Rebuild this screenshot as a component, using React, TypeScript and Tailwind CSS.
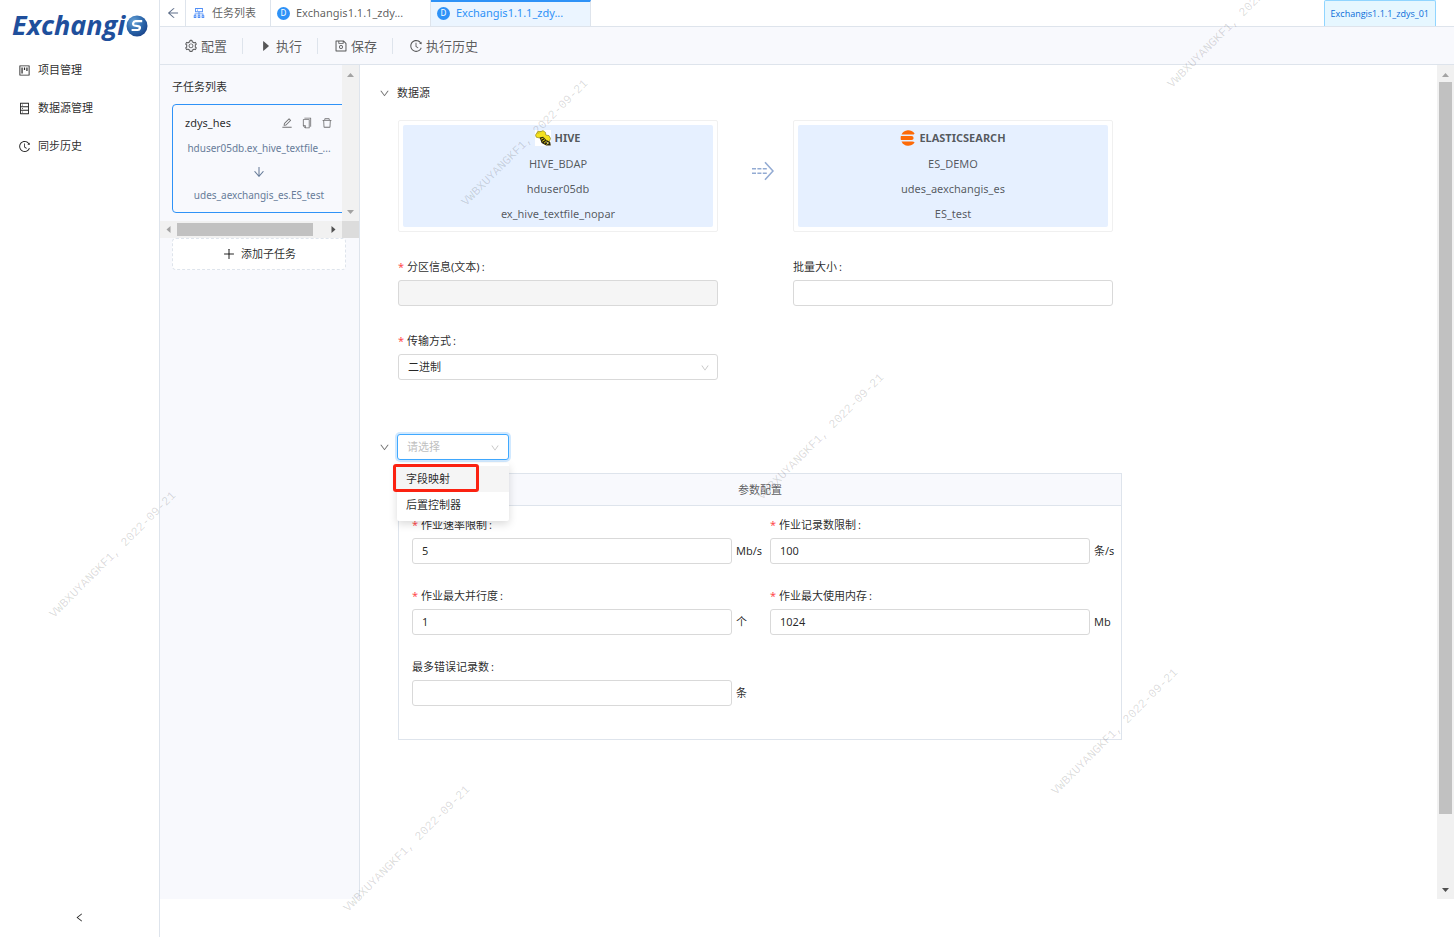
import React from "react";
import {
  AiOutlineArrowDown,
  AiOutlineArrowLeft,
  AiOutlineCluster,
  AiOutlineCopy,
  AiOutlineDatabase,
  AiOutlineDelete,
  AiOutlineDown,
  AiOutlineEdit,
  AiOutlineHistory,
  AiOutlineLeft,
  AiOutlinePlus,
  AiOutlineProject,
  AiOutlineSave,
  AiOutlineSetting,
  AiFillCaretRight,
} from "react-icons/ai";

const STAMP = "VWBXUYANGKF1, 2022-09-21";

const STRONG_STAMPS = [
  [113, 555],
  [407, 849],
  [525, 143],
  [821, 437],
  [1115, 732],
  [1231, 25],
];

function faintStamps() {
  const out: number[][] = [];
  for (let diff = -597; diff <= 1231; diff += 457) {
    for (let sum = 105; sum <= 2505; sum += 200) {
      const x = (sum + diff) / 2 - 90;
      const y = (sum - diff) / 2 + 90;
      if (x > -20 && x < 1470 && y > -20 && y < 950) out.push([x, y]);
    }
  }
  return out;
}

function Watermark() {
  return (
    <div aria-hidden="true" className="pointer-events-none absolute inset-0 z-50 overflow-hidden select-none">
      <svg className="h-full w-full font-['Liberation_Mono',monospace]">
        {faintStamps().map(([x, y]) => (
          <text key={`${x}:${y}`} transform={`translate(${x} ${y}) rotate(-45)`} textAnchor="middle" className="fill-black/[0.015] text-[18px]">
            {STAMP}
          </text>
        ))}
        {STRONG_STAMPS.map(([x, y]) => (
          <text key={`${x}:${y}`} transform={`translate(${x} ${y}) rotate(-45)`} textAnchor="middle" dominantBaseline="central" className="fill-black/15 text-[12px]">
            {STAMP}
          </text>
        ))}
      </svg>
    </div>
  );
}

function Logo() {
  return (
    <a href="#" aria-label="Exchangis" className="flex h-12 items-center gap-px pl-3 text-[#1f4f9c]">
      <span className="font-['Open_Sans',sans-serif] text-[27px] leading-none font-bold italic">Exchangi</span>
      <svg width="22" height="22" viewBox="0 0 22 22" className="mt-[3px] shrink-0">
        <defs>
          <radialGradient id="ball" cx="0.35" cy="0.3" r="0.8">
            <stop offset="0" stopColor="#6aa5d8" />
            <stop offset="0.55" stopColor="#2c67ab" />
            <stop offset="1" stopColor="#173f86" />
          </radialGradient>
        </defs>
        <circle cx="11" cy="11" r="10.5" fill="url(#ball)" />
        <path d="M16.2 6.2H9.6C7.2 6.2 6 9.9 8.4 10.5l4.4.9c1.9.5 1.2 3.6-1 3.6H5.6" fill="none" stroke="#fff" strokeWidth="2.2" />
      </svg>
    </a>
  );
}

const menu = [
  { label: "项目管理", Icon: AiOutlineProject },
  { label: "数据源管理", Icon: AiOutlineDatabase },
  { label: "同步历史", Icon: AiOutlineHistory },
];

function Sidebar() {
  return (
    <aside className="flex w-40 shrink-0 flex-col border-r border-[#dee4ec] bg-white">
      <Logo />
      <nav className="flex flex-1 flex-col pt-[3px] text-black/85">
        {menu.map(({ label, Icon }) => (
          <a key={label} href="#" className="flex h-[38px] items-center gap-[7px] pl-[18px]">
            <Icon size={13} />
            {label}
          </a>
        ))}
      </nav>
      <button type="button" aria-label="收起菜单" className="flex h-10 items-center justify-center text-black/85">
        <AiOutlineLeft size={11} />
      </button>
    </aside>
  );
}

function DocTab({ active }: { active?: boolean }) {
  return (
    <button
      type="button"
      className={
        active
          ? "flex w-40 items-center gap-[6px] border-t-2 border-r border-t-[#2e92f7] border-r-[#dee4ec] bg-[#ebf5ff] pb-[2px] pl-[6px] text-[#2e92f7]"
          : "flex w-40 items-center gap-[6px] border-r border-[#dee4ec] pl-[6px] text-black/65"
      }
    >
      <span className="flex size-[13px] items-center justify-center rounded-full bg-[#2e92f7] text-[8px] leading-none text-white">D</span>
      <span>Exchangis1.1.1_zdy...</span>
    </button>
  );
}

function TabBar() {
  return (
    <div className="flex h-[27px] border-b border-[#dee4ec] bg-white">
      <button type="button" aria-label="返回" className="flex w-[26px] items-center justify-center border-r border-[#dee4ec] text-[#5f6f8a]">
        <AiOutlineArrowLeft size={14} />
      </button>
      <button type="button" className="flex w-[85px] items-center gap-[6px] border-r border-[#dee4ec] pl-[6px] text-black/65">
        <AiOutlineCluster size={14} className="text-[#4f8ef7]" />
        任务列表
      </button>
      <DocTab />
      <DocTab active />
      <div className="mr-[18px] ml-auto flex items-center rounded-t-xs border border-b-0 border-[#91d5ff] bg-[#e6f7ff] px-[6px] pt-px font-['Open_Sans',sans-serif] text-[9px] text-[#096dd9]">
        Exchangis1.1.1_zdys_01
      </div>
    </div>
  );
}

const tools = [
  { label: "配置", Icon: AiOutlineSetting },
  { label: "执行", Icon: AiFillCaretRight },
  { label: "保存", Icon: AiOutlineSave },
  { label: "执行历史", Icon: AiOutlineHistory },
];

function Toolbar() {
  return (
    <div className="flex h-[38px] items-center border-b border-[#dee4ec] bg-[#f8f9fd] pl-2 text-[13px] text-black/65">
      {tools.map(({ label, Icon }, i) => (
        <React.Fragment key={label}>
          {i > 0 && <span className="h-4 w-px bg-[#dee4ec]" />}
          <button type="button" className="flex items-center gap-[3px] pr-[15px] pl-4">
            <Icon size={14} />
            {label}
          </button>
        </React.Fragment>
      ))}
    </div>
  );
}

function Tri({ dir, color }: { dir: "up" | "down" | "left" | "right"; color: string }) {
  const d = {
    up: "M0 6 L3.5 2 L7 6Z",
    down: "M0 2 L3.5 6 L7 2Z",
    left: "M5.5 0 L1.5 3.5 L5.5 7Z",
    right: "M1.5 0 L5.5 3.5 L1.5 7Z",
  }[dir];
  return (
    <svg width="7" height="7" viewBox="0 0 7 7" className="shrink-0">
      <path d={d} fill={color} />
    </svg>
  );
}

function TaskCard() {
  return (
    <div className="flex h-[109px] w-[174px] flex-col rounded border border-[#2e92f7] px-3 pt-[6px]">
      <div className="flex h-6 items-center text-black/85">
        <span className="flex-1">zdys_hes</span>
        <span className="flex gap-2 text-black/55">
          <button type="button" aria-label="编辑"><AiOutlineEdit size={12} /></button>
          <button type="button" aria-label="复制"><AiOutlineCopy size={12} /></button>
          <button type="button" aria-label="删除"><AiOutlineDelete size={12} /></button>
        </span>
      </div>
      <div className="flex flex-col items-center text-[10px] text-[#677c99]">
        <span className="h-[26px] leading-[26px] whitespace-nowrap">hduser05db.ex_hive_textfile_...</span>
        <span className="flex h-[22px] items-center"><AiOutlineArrowDown size={14} /></span>
        <span className="h-6 leading-6 whitespace-nowrap">udes_aexchangis_es.ES_test</span>
      </div>
    </div>
  );
}

function TaskPanel() {
  return (
    <section className="w-[200px] shrink-0 border-r border-[#dee4ec] bg-[#f8f9fd]">
      <div className="flex h-[156px]">
        <div className="min-w-0 flex-1 overflow-hidden pl-3">
          <h2 className="flex h-[39px] items-center pt-1 text-black/85">子任务列表</h2>
          <TaskCard />
        </div>
        <div className="flex w-[17px] flex-col items-center justify-between bg-[#f1f1f1] py-[6px]">
          <Tri dir="up" color="#a3a3a3" />
          <Tri dir="down" color="#a3a3a3" />
        </div>
      </div>
      <div className="flex h-[17px] bg-[#dcdcdc]">
        <div className="mr-[17px] flex flex-1 items-center bg-[#f1f1f1] px-[5px]">
          <Tri dir="left" color="#a3a3a3" />
          <span className="mr-[17px] ml-[5px] h-[13px] flex-1 bg-[#c1c1c1]" />
          <Tri dir="right" color="#505050" />
        </div>
      </div>
      <button type="button" className="ml-3 flex h-8 w-[174px] items-center justify-center gap-[5px] rounded border border-dashed border-[#dee4ec] bg-white text-black/85">
        <AiOutlinePlus size={14} />
        添加子任务
      </button>
    </section>
  );
}

function HiveIcon() {
  return (
    <svg width="16" height="16" viewBox="0 0 16 16">
      <rect width="16" height="16" fill="#fff" />
      <path d="M0.5 5 L3 1.2 L6 1.6 L8 0.6 L10.5 2.4 L10.8 5 L14 5.6 L15.6 8.6 L14 12 L9.5 10 L4.5 8 L1.2 7.2Z" fill="#f5e11d" stroke="#6b6206" strokeWidth="0.5" />
      <path d="M4.6 7.4 L8.2 6.8 L11 9.8 L15.2 12 L15.8 15.4 L11.2 15.6 L6.6 13Z" fill="#2b270d" />
      <path d="M6 9.2 L8.6 8 M7.2 11.4 L10 9.6 M9 13.2 L11.6 11 M11.6 14.8 L13.4 12.2" stroke="#f0d911" strokeWidth="0.9" />
      <path d="M11.5 12.2 L13.6 13.4" stroke="#fff" strokeWidth="0.8" />
    </svg>
  );
}

function ElasticIcon() {
  return (
    <svg width="16" height="16" viewBox="0 0 16 16" fill="#fd6a08">
      <path d="M1.5 4.6 A7.6 7.6 0 0 1 14.6 3.4 Q13.8 4.6 12.2 4.6Z" />
      <path d="M0.9 5.9 H11.5 A2.1 2.1 0 0 1 11.5 10.1 H0.9 A8 8 0 0 1 0.9 5.9Z" />
      <path d="M1.5 11.4 H12.2 Q13.8 11.4 14.6 12.6 A7.6 7.6 0 0 1 1.5 11.4Z" />
    </svg>
  );
}

function SourceCard({ icon, name, lines }: { icon: React.ReactNode; name: string; lines: string[] }) {
  return (
    <div className="rounded-xs border border-[#f0f0f0] bg-white p-1">
      <div className="flex flex-col items-center rounded-xs bg-[#e6f0ff] pb-px text-black/65">
        <div className="flex h-[26px] items-center gap-[3px] font-bold">
          {icon}
          {name}
        </div>
        {lines.map((line) => (
          <div key={line} className="h-[25px] leading-[25px]">{line}</div>
        ))}
      </div>
    </div>
  );
}

function FlowArrow() {
  return (
    <svg width="22" height="20" viewBox="0 0 22 20" fill="none" stroke="#93abd3" strokeWidth="1.4">
      <path d="M0 7.7H16M0 12.3H16" strokeDasharray="4 1.4" />
      <path d="M13 1.2L21 10L13 18.8" strokeWidth="1.6" />
    </svg>
  );
}

function FieldLabel({ id, text, required }: { id: string; text: string; required?: boolean }) {
  return (
    <label htmlFor={id} className="flex h-[26px] items-center gap-[3px] text-black/85">
      {required && <span className="text-[#ff4d4f]">*</span>}
      <span>
        {text}
        <span className="ml-0.5">:</span>
      </span>
    </label>
  );
}

type FieldProps = { id: string; label: string; required?: boolean; value?: string; unit?: string; disabled?: boolean };

function Field({ id, label, required, value = "", unit, disabled }: FieldProps) {
  return (
    <div>
      <FieldLabel id={id} text={label} required={required} />
      <div className="flex items-center gap-1 text-black/85">
        <input
          id={id}
          type="text"
          defaultValue={value}
          disabled={disabled}
          className="h-[26px] w-80 rounded-[3px] border border-[#d9d9d9] bg-white px-[9px] pb-px disabled:bg-[#f5f5f5]"
        />
        {unit && <span>{unit}</span>}
      </div>
    </div>
  );
}

function SectionHead({ children }: { children: React.ReactNode }) {
  return (
    <div className="flex h-[26px] items-center gap-[7px]">
      <button type="button" aria-label="折叠" className="text-black/55">
        <AiOutlineDown size={11} />
      </button>
      {children}
    </div>
  );
}

const params: FieldProps[] = [
  { id: "rate", label: "作业速率限制", required: true, value: "5", unit: "Mb/s" },
  { id: "records", label: "作业记录数限制", required: true, value: "100", unit: "条/s" },
  { id: "parallel", label: "作业最大并行度", required: true, value: "1", unit: "个" },
  { id: "memory", label: "作业最大使用内存", required: true, value: "1024", unit: "Mb" },
  { id: "errors", label: "最多错误记录数", unit: "条" },
];

function StageSelect() {
  return (
    <div className="relative z-10 w-28">
      <select
        aria-label="请选择"
        defaultValue=""
        className="block h-[26px] w-full appearance-none rounded-[3px] border border-[#40a9ff] bg-white px-[9px] text-[#bfbfbf] shadow-[0_0_0_2px_rgba(24,144,255,0.2)] outline-none"
      >
        <option value="">请选择</option>
        <option>字段映射</option>
        <option>后置控制器</option>
      </select>
      <AiOutlineDown size={10} className="pointer-events-none absolute top-[9px] right-[9px] text-black/25" />
      <ul role="listbox" aria-label="处理阶段" className="absolute top-[29px] left-0 w-full rounded-xs bg-white py-[3px] text-black/85 shadow-[0_3px_8px_rgba(0,0,0,0.15)]">
        <li role="option" aria-selected="true" className="h-[26px] bg-[#f5f5f5] px-[9px] leading-[26px]">字段映射</li>
        <li role="option" aria-selected="false" className="h-[26px] px-[9px] leading-[26px]">后置控制器</li>
      </ul>
      <span className="absolute top-[30px] -left-1 h-7 w-[86px] rounded-[3px] border-3 border-[#fb2211]" />
    </div>
  );
}

function Content() {
  return (
    <main className="min-w-0 flex-1 overflow-hidden bg-white pt-[15px] pl-[19px]">
      <SectionHead>
        <h2 className="text-black/85">数据源</h2>
      </SectionHead>
      <div className="mt-[14px] ml-[19px] grid grid-cols-[320px_75px_320px]">
        <SourceCard icon={<HiveIcon />} name="HIVE" lines={["HIVE_BDAP", "hduser05db", "ex_hive_textfile_nopar"]} />
        <div className="flex items-center justify-center pb-[10px] pl-[15px]">
          <FlowArrow />
        </div>
        <SourceCard icon={<ElasticIcon />} name="ELASTICSEARCH" lines={["ES_DEMO", "udes_aexchangis_es", "ES_test"]} />
      </div>
      <div className="mt-[22px] ml-[19px] grid grid-cols-[320px_320px] gap-x-[75px] gap-y-[22px]">
        <Field id="partition" label="分区信息(文本)" required disabled />
        <Field id="batch" label="批量大小" />
        <div>
          <FieldLabel id="transfer" text="传输方式" required />
          <div className="relative">
            <select id="transfer" className="block h-[26px] w-full appearance-none rounded-[3px] border border-[#d9d9d9] bg-white px-[9px] text-black/85">
              <option>二进制</option>
            </select>
            <AiOutlineDown size={10} className="pointer-events-none absolute top-[9px] right-2 text-black/25" />
          </div>
        </div>
      </div>
      <div className="mt-[54px]">
        <SectionHead>
          <StageSelect />
        </SectionHead>
      </div>
      <section className="mt-[13px] ml-[19px] w-[724px] max-w-full border border-[#dee4ec]">
        <h3 className="h-8 border-b border-[#dee4ec] bg-[#f8f9fd] text-center leading-8 text-black/65">参数配置</h3>
        <div className="grid grid-cols-[358px_auto] gap-y-[19px] pt-[6px] pb-[33px] pl-[13px]">
          {params.map((p) => (
            <Field key={p.id} {...p} />
          ))}
        </div>
      </section>
    </main>
  );
}

function PageScrollbar() {
  return (
    <div className="flex w-[17px] shrink-0 flex-col items-center bg-[#f1f1f1] py-[6px]">
      <Tri dir="up" color="#a3a3a3" />
      <span className="mt-1 w-[13px] grow-[732] bg-[#c1c1c1]" />
      <span className="grow-[72]" />
      <Tri dir="down" color="#505050" />
    </div>
  );
}

export default function App() {
  return (
    <div className="relative flex min-h-screen overflow-hidden bg-white font-['Noto_Sans','Noto_Sans_CJK_SC',sans-serif] text-[11px] leading-4">
      <Sidebar />
      <div className="flex min-w-0 flex-1 flex-col pb-[38px]">
        <TabBar />
        <Toolbar />
        <div className="flex flex-1">
          <TaskPanel />
          <Content />
          <PageScrollbar />
        </div>
      </div>
      <Watermark />
    </div>
  );
}
